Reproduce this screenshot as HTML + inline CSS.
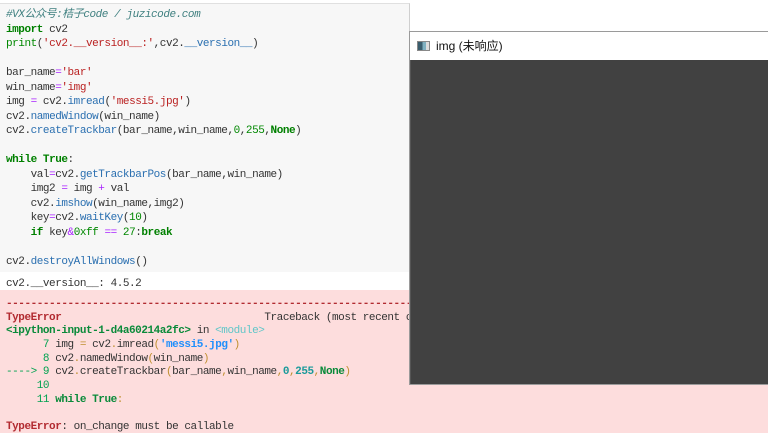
<!DOCTYPE html>
<html><head><meta charset="utf-8"><style>
body{margin:0;width:768px;height:433px;overflow:hidden;background:#fff;position:relative;font-family:"Liberation Mono","Noto Sans CJK SC",monospace;font-size:11px;letter-spacing:-0.45px}
.cell{position:absolute;left:0;top:3px;width:409px;height:268px;background:#f7f7f7;border-top:1px solid #e0e0e0;border-right:1px solid #cfcfcf}
pre{margin:0;font:inherit;white-space:pre}
.code{position:absolute;left:6px;top:8px;line-height:14.5px;color:#333}
.c{color:#408080;font-style:italic}.k{color:#008000;font-weight:bold}.s{color:#ba2121}.f{color:#2a6fb0}.o{color:#aa22ff}.n{color:#080}
.out{position:absolute;left:6px;top:278px;color:#333}
.err{position:absolute;left:0;top:290px;width:768px;height:143px;background:#fddddd}
.et{position:absolute;left:6px;top:8px;line-height:13.65px;color:#333}
.r{color:#b22b31;font-weight:bold}.g{color:#0a8a3a;font-weight:bold}.cy{color:#60c6c8}.gn{color:#00a250}.b{color:#208ffb;font-weight:bold}.y{color:#c09030}.t{color:#1a9a9a;font-weight:bold}
.win{position:absolute;left:409px;top:31px;width:359px;height:354px;background:#fff;border:1px solid #9a9a9a;border-right:none;box-sizing:border-box}
.title{height:28px;font-family:"Liberation Sans","Noto Sans CJK SC",sans-serif;letter-spacing:0;font-size:12px;color:#111;line-height:28px;padding-left:26px;position:relative}
.ic{position:absolute;left:7px;top:9px;width:13px;height:10px;background:linear-gradient(90deg,#3a5d6d 0 40%,#7fb0c0 40% 75%,#ddd 75%);border:1px solid #888;box-sizing:border-box}
.dark{position:absolute;left:0;top:28px;right:0;bottom:0;background:#414141;border-left:1px solid #555}
</style></head><body>
<div class="cell"></div>
<pre class="code"><span class="c">#VX公众号:桔子code / juzicode.com</span>
<span class="k">import</span> cv2
<span class="n">print</span>(<span class="s">'cv2.__version__:'</span>,cv2.<span class="f">__version__</span>)

bar_name<span class="o">=</span><span class="s">'bar'</span>
win_name<span class="o">=</span><span class="s">'img'</span>
img <span class="o">=</span> cv2.<span class="f">imread</span>(<span class="s">'messi5.jpg'</span>)
cv2.<span class="f">namedWindow</span>(win_name)
cv2.<span class="f">createTrackbar</span>(bar_name,win_name,<span class="n">0</span>,<span class="n">255</span>,<span class="k">None</span>)

<span class="k">while</span> <span class="k">True</span>:
    val<span class="o">=</span>cv2.<span class="f">getTrackbarPos</span>(bar_name,win_name)
    img2 <span class="o">=</span> img <span class="o">+</span> val
    cv2.<span class="f">imshow</span>(win_name,img2)
    key<span class="o">=</span>cv2.<span class="f">waitKey</span>(<span class="n">10</span>)
    <span class="k">if</span> key<span class="o">&amp;</span><span class="n">0xff</span> <span class="o">==</span> <span class="n">27</span>:<span class="k">break</span>

cv2.<span class="f">destroyAllWindows</span>()</pre>
<pre class="out">cv2.__version__: 4.5.2</pre>
<div class="err"><pre class="et"><span class="r">---------------------------------------------------------------------------</span>
<span class="r">TypeError</span>                                 Traceback (most recent call last)
<span class="g">&lt;ipython-input-1-d4a60214a2fc&gt;</span> in <span class="cy">&lt;module&gt;</span>
<span class="gn">      7</span> img <span class="y">=</span> cv2<span class="y">.</span>imread<span class="y">(</span><span class="b">'messi5.jpg'</span><span class="y">)</span>
<span class="gn">      8</span> cv2<span class="y">.</span>namedWindow<span class="y">(</span>win_name<span class="y">)</span>
<span class="gn">----&gt; 9</span> cv2<span class="y">.</span>createTrackbar<span class="y">(</span>bar_name<span class="y">,</span>win_name<span class="y">,</span><span class="t">0</span><span class="y">,</span><span class="t">255</span><span class="y">,</span><span class="g">None</span><span class="y">)</span>
<span class="gn">     10</span>
<span class="gn">     11</span> <span class="g">while</span> <span class="g">True</span><span class="y">:</span>

<span class="r">TypeError</span>: on_change must be callable</pre></div>
<div class="win"><div class="title"><div class="ic"></div>img (未响应)</div><div class="dark"></div></div>
</body></html>
